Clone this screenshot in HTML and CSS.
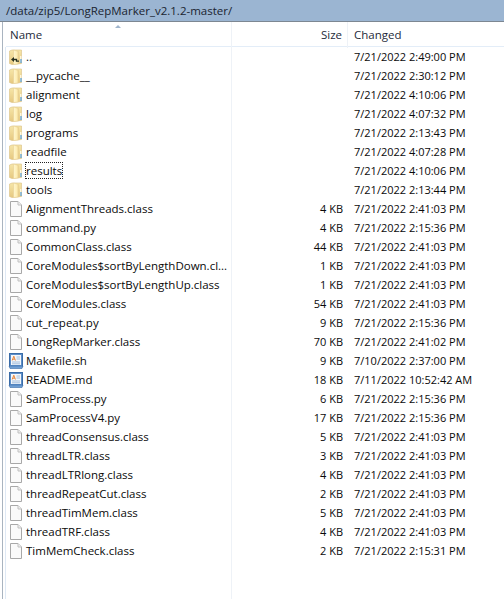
FILE: index.html
```html
<!DOCTYPE html>
<html lang="en">
<head>
    <meta charset="UTF-8">
    <title>LongRepMarker_v2.1.2-master</title>
    <link rel="stylesheet" href="styles.css">
</head>
<body>
    <svg class="defs" width="0" height="0">
        <defs>
            <linearGradient id="folderBack" x1="0" y1="0" x2="0" y2="1">
                <stop offset="0" stop-color="#f6e6a8"/>
                <stop offset="1" stop-color="#e6c880"/>
            </linearGradient>
            <linearGradient id="folderFront" x1="0" y1="0" x2="1" y2="0">
                <stop offset="0" stop-color="#fff6cf"/>
                <stop offset=".6" stop-color="#fdeeb6"/>
                <stop offset="1" stop-color="#eed491"/>
            </linearGradient>
            <symbol id="folder" viewBox="0 0 16 16">
                <path d="M1.5 2 L4 1 L13.5 1 L13.5 14.5 L4 15.5 L1.5 14.5 Z" fill="url(#folderBack)" stroke="#d8c084" stroke-width=".6"/>
                <path d="M5.5 1 L10.5 2.5 L10.5 15 L5.5 15.5 Z" fill="url(#folderFront)" stroke="#e4cb8c" stroke-width=".5"/>
                <path d="M12 7 L13.4 7 L13.4 13.5 L12 13.5 Z" fill="#fdf6dc"/>
                <path d="M12.4 10 L13.6 10 L13.6 14 L12.4 14 Z" fill="#4f9ad8"/>
            </symbol>
            <symbol id="up" viewBox="0 0 16 16">
                <use href="#folder"/>
                <path d="M3 10.5 L6 8 L6 13 Z" fill="#28301f"/>
                <path d="M5.5 10.5 H8.5 V12.2 H11" stroke="#28301f" stroke-width="1.3" fill="none"/>
            </symbol>
            <symbol id="file" viewBox="0 0 16 16">
                <path d="M2.5 .5 H10 L13.5 4 V15.5 H2.5 Z" fill="#fafafa" stroke="#a8a8a8"/>
                <path d="M10 .5 V4 H13.5" fill="#eeeeee" stroke="#c0c0c0"/>
            </symbol>
            <symbol id="doc" viewBox="0 0 16 16">
                <rect x="1.5" y=".5" width="13" height="13" fill="#5d8fc9" stroke="#3a6ca8"/>
                <rect x="3" y="2" width="10" height="10" fill="#f4f7fb"/>
                <path d="M4.2 7.5 L5.8 3.2 L7.4 7.5 M4.8 6.2 H6.8" stroke="#e8863a" stroke-width="1" fill="none"/>
                <path d="M8.5 4 h3.5 M8.5 6 h3.5 M4 9 h8 M4 10.8 h8" stroke="#8fb0d6" stroke-width=".8"/>
                <path d="M1 13 H15 L14 15.5 H2 Z" fill="#6f9fd4" stroke="#3a6ca8" stroke-width=".6"/>
            </symbol>
        </defs>
    </svg>

    <div class="path-bar">/data/zip5/LongRepMarker_v2.1.2-master/</div>

    <div class="panel">
        <div class="list-head">
            <div class="head-cell name">Name<span class="sort-mark"></span></div>
            <div class="head-cell size">Size</div>
            <div class="head-cell changed">Changed</div>
        </div>

        <div class="list-body">
            <div class="row"><span class="name"><svg class="icon"><use href="#up"/></svg><span class="label">..</span></span><span class="size"></span><span class="changed">7/21/2022 2:49:00 PM</span></div>
            <div class="row"><span class="name"><svg class="icon"><use href="#folder"/></svg><span class="label">__pycache__</span></span><span class="size"></span><span class="changed">7/21/2022 2:30:12 PM</span></div>
            <div class="row"><span class="name"><svg class="icon"><use href="#folder"/></svg><span class="label">alignment</span></span><span class="size"></span><span class="changed">7/21/2022 4:10:06 PM</span></div>
            <div class="row"><span class="name"><svg class="icon"><use href="#folder"/></svg><span class="label">log</span></span><span class="size"></span><span class="changed">7/21/2022 4:07:32 PM</span></div>
            <div class="row"><span class="name"><svg class="icon"><use href="#folder"/></svg><span class="label">programs</span></span><span class="size"></span><span class="changed">7/21/2022 2:13:43 PM</span></div>
            <div class="row"><span class="name"><svg class="icon"><use href="#folder"/></svg><span class="label">readfile</span></span><span class="size"></span><span class="changed">7/21/2022 4:07:28 PM</span></div>
            <div class="row"><span class="name"><svg class="icon"><use href="#folder"/></svg><span class="label focused">results</span></span><span class="size"></span><span class="changed">7/21/2022 4:10:06 PM</span></div>
            <div class="row"><span class="name"><svg class="icon"><use href="#folder"/></svg><span class="label">tools</span></span><span class="size"></span><span class="changed">7/21/2022 2:13:44 PM</span></div>
            <div class="row"><span class="name"><svg class="icon"><use href="#file"/></svg><span class="label">AlignmentThreads.class</span></span><span class="size">4 KB</span><span class="changed">7/21/2022 2:41:03 PM</span></div>
            <div class="row"><span class="name"><svg class="icon"><use href="#file"/></svg><span class="label">command.py</span></span><span class="size">4 KB</span><span class="changed">7/21/2022 2:15:36 PM</span></div>
            <div class="row"><span class="name"><svg class="icon"><use href="#file"/></svg><span class="label">CommonClass.class</span></span><span class="size">44 KB</span><span class="changed">7/21/2022 2:41:03 PM</span></div>
            <div class="row"><span class="name"><svg class="icon"><use href="#file"/></svg><span class="label">CoreModules$sortByLengthDown.cl...</span></span><span class="size">1 KB</span><span class="changed">7/21/2022 2:41:03 PM</span></div>
            <div class="row"><span class="name"><svg class="icon"><use href="#file"/></svg><span class="label">CoreModules$sortByLengthUp.class</span></span><span class="size">1 KB</span><span class="changed">7/21/2022 2:41:03 PM</span></div>
            <div class="row"><span class="name"><svg class="icon"><use href="#file"/></svg><span class="label">CoreModules.class</span></span><span class="size">54 KB</span><span class="changed">7/21/2022 2:41:03 PM</span></div>
            <div class="row"><span class="name"><svg class="icon"><use href="#file"/></svg><span class="label">cut_repeat.py</span></span><span class="size">9 KB</span><span class="changed">7/21/2022 2:15:36 PM</span></div>
            <div class="row"><span class="name"><svg class="icon"><use href="#file"/></svg><span class="label">LongRepMarker.class</span></span><span class="size">70 KB</span><span class="changed">7/21/2022 2:41:02 PM</span></div>
            <div class="row"><span class="name"><svg class="icon"><use href="#doc"/></svg><span class="label">Makefile.sh</span></span><span class="size">9 KB</span><span class="changed">7/10/2022 2:37:00 PM</span></div>
            <div class="row"><span class="name"><svg class="icon"><use href="#doc"/></svg><span class="label">README.md</span></span><span class="size">18 KB</span><span class="changed">7/11/2022 10:52:42 AM</span></div>
            <div class="row"><span class="name"><svg class="icon"><use href="#file"/></svg><span class="label">SamProcess.py</span></span><span class="size">6 KB</span><span class="changed">7/21/2022 2:15:36 PM</span></div>
            <div class="row"><span class="name"><svg class="icon"><use href="#file"/></svg><span class="label">SamProcessV4.py</span></span><span class="size">17 KB</span><span class="changed">7/21/2022 2:15:36 PM</span></div>
            <div class="row"><span class="name"><svg class="icon"><use href="#file"/></svg><span class="label">threadConsensus.class</span></span><span class="size">5 KB</span><span class="changed">7/21/2022 2:41:03 PM</span></div>
            <div class="row"><span class="name"><svg class="icon"><use href="#file"/></svg><span class="label">threadLTR.class</span></span><span class="size">3 KB</span><span class="changed">7/21/2022 2:41:03 PM</span></div>
            <div class="row"><span class="name"><svg class="icon"><use href="#file"/></svg><span class="label">threadLTRlong.class</span></span><span class="size">4 KB</span><span class="changed">7/21/2022 2:41:03 PM</span></div>
            <div class="row"><span class="name"><svg class="icon"><use href="#file"/></svg><span class="label">threadRepeatCut.class</span></span><span class="size">2 KB</span><span class="changed">7/21/2022 2:41:03 PM</span></div>
            <div class="row"><span class="name"><svg class="icon"><use href="#file"/></svg><span class="label">threadTimMem.class</span></span><span class="size">5 KB</span><span class="changed">7/21/2022 2:41:03 PM</span></div>
            <div class="row"><span class="name"><svg class="icon"><use href="#file"/></svg><span class="label">threadTRF.class</span></span><span class="size">4 KB</span><span class="changed">7/21/2022 2:41:03 PM</span></div>
            <div class="row"><span class="name"><svg class="icon"><use href="#file"/></svg><span class="label">TimMemCheck.class</span></span><span class="size">2 KB</span><span class="changed">7/21/2022 2:15:31 PM</span></div>
        </div>
    </div>
</body>
</html>
```

FILE: styles.css
```css
html, body {
    height: 100%;
}
body {
    margin: 0;
    display: flex;
    flex-direction: column;
    overflow: hidden;
    background-color: #ffffff;
    color: #0a0a0a;
    font-family: "Open Sans", "Noto Sans", sans-serif;
    font-size: 11.5px;
}
.defs {
    position: absolute;
}
.path-bar {
    height: 21px;
    line-height: 21px;
    padding-left: 6px;
    background-color: #9bb5d2;
    border-bottom: 1px solid #7d8792;
    color: #1a2430;
    font-size: 11.5px;
}
.panel {
    flex: 1;
    border-left: 1px solid #a9b4c0;
    margin-left: 2px;
    min-height: 0;
    display: flex;
    flex-direction: column;
}
.list-head {
    display: grid;
    grid-template-columns: 226px 116px 1fr;
    height: 24px;
    line-height: 26px;
    margin-left: 3px;
    border-bottom: 1px solid #e3edf8;
}
.head-cell {
    position: relative;
    border-right: 1px solid #eef2f7;
    padding-left: 4px;
    color: #1e2b3a;
}
.head-cell.size {
    text-align: right;
    padding-right: 5px;
}
.head-cell.changed {
    border-right: none;
    padding-left: 6px;
}
.sort-mark {
    position: absolute;
    left: 109px;
    top: 3px;
    border-left: 3px solid transparent;
    border-right: 3px solid transparent;
    border-bottom: 3px solid #9fb4cc;
}
.list-body {
    flex: 1;
    margin-left: 2px;
    border-left: 1px solid #dfe9f5;
    background: linear-gradient(#eef2f7, #eef2f7) 225px 0 / 1px 100% no-repeat;
}
.row {
    display: grid;
    grid-template-columns: 226px 116px 1fr;
    height: 19px;
    line-height: 19px;
}
.row .name {
    display: flex;
    align-items: center;
    min-width: 0;
    padding-left: 2px;
}
.icon {
    flex: none;
    width: 16px;
    height: 16px;
    margin-right: 1px;
}
.label {
    overflow: hidden;
    white-space: nowrap;
    padding: 0 1px;
}
.focused {
    outline: 1px dotted #222222;
    outline-offset: -1px;
    line-height: 17px;
}
.row .size {
    text-align: right;
    padding-right: 5px;
    font-size: 11px;
}
.row .changed {
    padding-left: 6px;
    white-space: nowrap;
    font-size: 11px;
}
```
